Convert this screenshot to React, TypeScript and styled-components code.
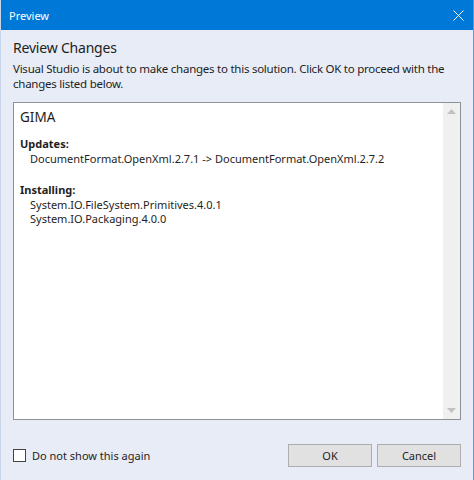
import React from "react";
import styled, { createGlobalStyle } from "styled-components";

const Global = createGlobalStyle`
  html, body { margin: 0; padding: 0; background: #e8ecf6; }
  body { font-family: "Noto Sans", "Segoe UI", sans-serif; }
`;

const Window = styled.div`
  width: 474px;
  height: 480px;
  box-sizing: border-box;
  display: flex;
  flex-direction: column;
  background: #e8ecf6;
  border-left: 1px solid #c9d6ea;
  border-right: 1px solid #5a9be0;
  color: #1e1e1e;
`;

const TitleBar = styled.div`
  height: 30px;
  flex: none;
  background: #0078d7;
  display: flex;
  align-items: center;
  justify-content: space-between;
  padding: 0 9px 0 8px;
  color: #fff;
  font-size: 11px;
`;

const CloseIcon = () => (
  <svg width="11" height="11" viewBox="0 0 11 11">
    <path d="M0.5 0.5 L10.5 10.5 M10.5 0.5 L0.5 10.5" stroke="#fff" strokeWidth="1" />
  </svg>
);

const Content = styled.div`
  flex: 1;
  display: flex;
  flex-direction: column;
  padding: 7px 12px 0 12px;
`;

const Heading = styled.div`
  font-size: 14px;
  letter-spacing: -0.2px;
  line-height: 22px;
  color: #222;
`;

const Description = styled.div`
  margin-top: 2px;
  font-size: 11.5px;
  letter-spacing: -0.25px;
  line-height: 15px;
  color: #1e1e1e;
`;

const ListBox = styled.div`
  margin-top: 11px;
  height: 318px;
  box-sizing: border-box;
  border: 1px solid #8e9196;
  background: #fff;
  display: flex;
`;

const ListBody = styled.div`
  flex: 1;
  padding: 4px 6px;
  font-size: 11px;
  line-height: 14.5px;
`;

const Project = styled.div`
  font-size: 13.5px;
  line-height: 20px;
  margin-bottom: 10px;
`;

const SectionTitle = styled.div`
  font-weight: 700;
`;

const Item = styled.div`
  padding-left: 10px;
`;

const Section = styled.div<{ $gap?: number }>`
  margin-bottom: ${(p) => p.$gap ?? 0}px;
`;

const ScrollBar = styled.div`
  width: 17px;
  background: #f0f0f0;
  display: flex;
  flex-direction: column;
  justify-content: space-between;
  align-items: center;
`;

const Arrow = styled.div`
  height: 17px;
  display: flex;
  align-items: center;
  justify-content: center;
`;

const Footer = styled.div`
  flex: 1;
  display: flex;
  align-items: center;
  justify-content: space-between;
  padding-top: 11px;
`;

const CheckLabel = styled.label`
  display: flex;
  align-items: center;
  gap: 6px;
  font-size: 11px;
  color: #1e1e1e;
`;

const CheckBox = styled.span`
  width: 13px;
  height: 13px;
  box-sizing: border-box;
  border: 1px solid #444;
  background: #fff;
  display: inline-block;
`;

const Buttons = styled.div`
  display: flex;
  gap: 5px;
`;

const Button = styled.button`
  width: 84px;
  height: 23px;
  box-sizing: border-box;
  border: 1px solid #adadad;
  background: #e1e1e1;
  font-family: "Noto Sans", sans-serif;
  font-size: 11px;
  color: #1e1e1e;
  padding: 0;
`;

export default function App() {
  return (
    <>
      <Global />
      <Window>
        <TitleBar>
          <span>Preview</span>
          <CloseIcon />
        </TitleBar>
        <Content>
          <Heading>Review Changes</Heading>
          <Description>
            Visual Studio is about to make changes to this solution. Click OK to proceed with the
            changes listed below.
          </Description>
          <ListBox>
            <ListBody>
              <Project>GIMA</Project>
              <Section $gap={17}>
                <SectionTitle>Updates:</SectionTitle>
                <Item>DocumentFormat.OpenXml.2.7.1 -&gt; DocumentFormat.OpenXml.2.7.2</Item>
              </Section>
              <Section>
                <SectionTitle>Installing:</SectionTitle>
                <Item>System.IO.FileSystem.Primitives.4.0.1</Item>
                <Item>System.IO.Packaging.4.0.0</Item>
              </Section>
            </ListBody>
            <ScrollBar>
              <Arrow>
                <svg width="9" height="5" viewBox="0 0 9 5">
                  <path d="M0 5 L4.5 0 L9 5 Z" fill="#c2c2c2" />
                </svg>
              </Arrow>
              <Arrow>
                <svg width="9" height="5" viewBox="0 0 9 5">
                  <path d="M0 0 L4.5 5 L9 0 Z" fill="#c2c2c2" />
                </svg>
              </Arrow>
            </ScrollBar>
          </ListBox>
          <Footer>
            <CheckLabel>
              <CheckBox />
              Do not show this again
            </CheckLabel>
            <Buttons>
              <Button>OK</Button>
              <Button>Cancel</Button>
            </Buttons>
          </Footer>
        </Content>
      </Window>
    </>
  );
}
